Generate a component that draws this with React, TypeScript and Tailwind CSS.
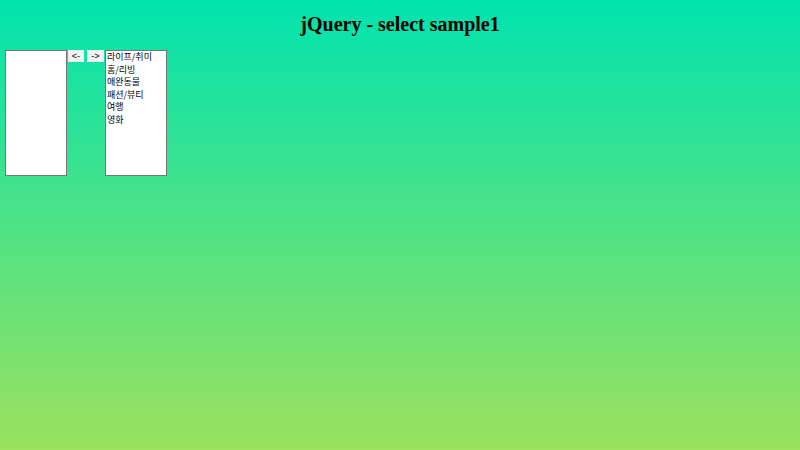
import React, { useState } from 'react'

const INITIAL = ['라이프/취미', '홈/리빙', '애완동물', '패션/뷰티', '여행', '영화']

export default function App() {
  const [left, setLeft] = useState<string[]>([])
  const [right, setRight] = useState<string[]>(INITIAL)
  const [pickLeft, setPickLeft] = useState<string[]>([])
  const [pickRight, setPickRight] = useState<string[]>([])

  // move selected items from the right list back to the left one
  const toLeft = () => {
    setLeft(l => [...l, ...pickRight])
    setRight(r => r.filter(x => !pickRight.includes(x)))
    setPickRight([])
  }

  const toRight = () => {
    setRight(r => [...r, ...pickLeft])
    setLeft(l => l.filter(x => !pickLeft.includes(x)))
    setPickLeft([])
  }

  const listCls =
    "w-[62px] h-[126px] bg-white border border-[#767676] text-[9px] leading-[12.5px] text-black outline-none overflow-hidden [font-family:'Noto_Sans_CJK_KR','Liberation_Sans',sans-serif]"
  const btnCls =
    "h-[12px] bg-[#f3f3f3] border border-[#e9e9e9] text-[9px] leading-[10px] text-black [font-family:'Liberation_Sans',sans-serif]"

  return (
    <div className="w-full min-h-[450px] bg-[linear-gradient(to_top,#9be15d_0%,#00e3ae_100%)]">
      <h1 className="pt-[12px] text-center text-[20px] leading-[24px] font-bold text-black [font-family:'Liberation_Serif',serif]">
        jQuery - select sample1
      </h1>
      <div className="mt-[14px] pl-[5px] flex items-start">
        <div className={listCls}>
          {left.map(item => (
            <div
              key={item}
              onClick={() => setPickLeft(p => (p.includes(item) ? p.filter(x => x !== item) : [...p, item]))}
              className={`pl-[1px] ${pickLeft.includes(item) ? 'bg-[#cecece]' : ''}`}
            >
              {item}
            </div>
          ))}
        </div>
        <button onClick={toLeft} className={`${btnCls} ml-[1px] w-[16px]`}>&lt;-</button>
        <button onClick={toRight} className={`${btnCls} ml-[3px] w-[17px]`}>-&gt;</button>
        <div className={`${listCls} ml-[1px]`}>
          {right.map(item => (
            <div
              key={item}
              onClick={() => setPickRight(p => (p.includes(item) ? p.filter(x => x !== item) : [...p, item]))}
              className={`pl-[1px] ${pickRight.includes(item) ? 'bg-[#cecece]' : ''}`}
            >
              {item}
            </div>
          ))}
        </div>
      </div>
    </div>
  )
}
